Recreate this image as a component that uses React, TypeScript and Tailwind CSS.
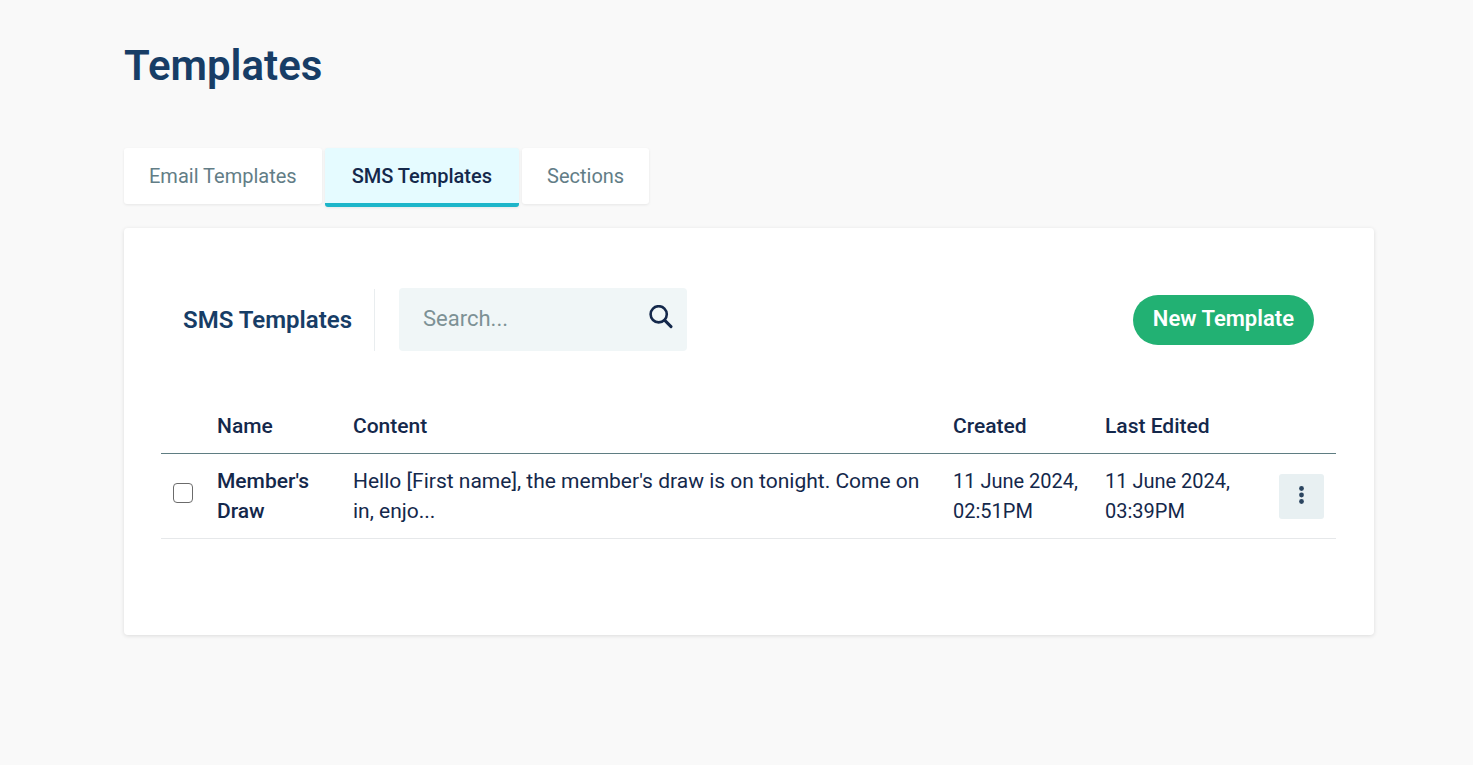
import React, { useState } from 'react';

type Template = {
  id: number;
  name: string;
  content: string;
  created: string;
  edited: string;
};

const tabs = ['Email Templates', 'SMS Templates', 'Sections'];

const templates: Template[] = [
  {
    id: 1,
    name: "Member's Draw",
    content: "Hello [First name], the member's draw is on tonight. Come on in, enjo...",
    created: '11 June 2024, 02:51PM',
    edited: '11 June 2024, 03:39PM',
  },
];

const SearchIcon = () => (
  <svg className="w-6 h-6" viewBox="0 0 24 24" fill="none" stroke="currentColor" strokeLinecap="round" aria-hidden="true">
    <circle cx="9.7" cy="9.3" r="8.1" strokeWidth="2.6" />
    <path d="M15.8 15.4L22 21.6" strokeWidth="3" />
  </svg>
);

const DotsIcon = () => (
  <svg className="w-5 h-5" viewBox="0 0 20 20" fill="currentColor" aria-hidden="true">
    <circle cx="9.5" cy="2.5" r="2.4" />
    <circle cx="9.5" cy="9" r="2.4" />
    <circle cx="9.5" cy="15.5" r="2.4" />
  </svg>
);

const App: React.FC = () => {
  const [activeTab, setActiveTab] = useState('SMS Templates');
  const [query, setQuery] = useState('');

  const rows = templates.filter((t) => t.name.toLowerCase().includes(query.toLowerCase()));

  return (
    <div className="min-h-screen bg-[#f9f9f9] pt-10 pb-16 pl-[124px] pr-[99px] font-['Roboto',sans-serif] text-xl text-[#14284b]">
      <h1 className="text-[42px] leading-[52px] font-semibold text-[#173d66]">Templates</h1>

      {/* Tabs */}
      <div className="flex items-start gap-[3px] mt-14 h-[60px]">
        {tabs.map((tab) => (
          <button
            key={tab}
            type="button"
            onClick={() => setActiveTab(tab)}
            className={`whitespace-nowrap rounded-[3px] shadow-[0_1px_3px_rgba(0,0,0,0.08)] ${
              tab === activeTab
                ? 'h-[59px] px-[27px] bg-[#e5fbff] border-b-4 border-[#1cb5c9] font-medium text-[#14284b]'
                : 'h-14 px-[25px] bg-white text-[#627d86]'
            }`}
          >
            {tab}
          </button>
        ))}
      </div>

      <main className="mt-5 rounded-[4px] bg-white pt-[60px] pb-24 pl-[37px] pr-[38px] shadow-[0_1px_4px_rgba(0,0,0,0.12)]">
        {/* Toolbar */}
        <div className="flex items-center px-[22px]">
          <h2 className="flex items-center h-[62px] pr-[22px] mr-6 border-r border-[#e9edef] text-2xl font-semibold text-[#173d66] whitespace-nowrap">
            {activeTab}
          </h2>
          <div className="flex items-center w-[288px] h-[63px] rounded-[4px] bg-[#f0f6f7] pl-6 pr-[14px]">
            <input
              type="text"
              aria-label="Search templates"
              placeholder="Search..."
              value={query}
              onChange={(e) => setQuery(e.target.value)}
              className="flex-1 min-w-0 bg-transparent text-[22px] outline-none placeholder:text-[#7d9195]"
            />
            <button type="button" aria-label="Search" className="pb-[6px]">
              <SearchIcon />
            </button>
          </div>
          <button type="button" className="ml-auto h-[50px] px-5 rounded-full bg-[#22b173] text-[22px] font-semibold text-white whitespace-nowrap">
            New Template
          </button>
        </div>

        {/* Templates list */}
        <table className="w-full mt-12 table-fixed text-left text-[21px] leading-[30px]">
          <colgroup>
            <col className="w-[44px]" />
            <col className="w-[136px]" />
            <col />
            <col className="w-[152px]" />
            <col className="w-[174px]" />
            <col className="w-[69px]" />
          </colgroup>
          <thead>
            <tr className="border-b border-[#5f7d82]">
              <th />
              <th className="p-3 font-medium">Name</th>
              <th className="p-3 font-medium">Content</th>
              <th className="p-3 font-medium">Created</th>
              <th className="p-3 font-medium">Last Edited</th>
              <th />
            </tr>
          </thead>
          <tbody>
            {rows.map((t) => (
              <tr key={t.id} className="border-b border-[#e6e8ea]">
                <td className="pl-3 pb-[6px]">
                  <input
                    type="checkbox"
                    aria-label={`Select ${t.name}`}
                    className="block w-5 h-5 appearance-none rounded-[4px] border border-[#6b6b6b] bg-white checked:bg-[#1cb5c9]"
                  />
                </td>
                <td className="p-3 font-medium">{t.name}</td>
                <td className="py-3 pl-3 pr-5">{t.content}</td>
                <td className="p-3 text-xl leading-[30px]">{t.created}</td>
                <td className="py-3 pl-3 pr-8 text-xl leading-[30px]">{t.edited}</td>
                <td className="px-3">
                  <button type="button" aria-label={`Actions for ${t.name}`} className="flex items-center justify-center w-[45px] h-[45px] rounded-[3px] bg-[#e8f0f2] text-[#2b4560]">
                    <DotsIcon />
                  </button>
                </td>
              </tr>
            ))}
          </tbody>
        </table>
      </main>
    </div>
  );
};

export default App;
